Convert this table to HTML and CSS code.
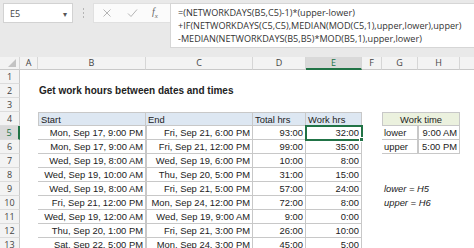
FILE: index.html
```html
<!DOCTYPE html>
<html>
<head>
<meta charset="utf-8">
<link rel="stylesheet" href="styles.css">
</head>
<body>
<div class="app">
  <div class="toolbar">
    <div class="namebox"><span>E5</span><span class="caret">&#9662;</span></div>
    <div class="grip"><span></span><span></span><span></span></div>
    <div class="iconbox">
      <svg class="ico" width="10" height="10" viewBox="0 0 10 10"><path d="M1.5 1.5 L8.5 8.5 M8.5 1.5 L1.5 8.5" stroke="#b5b5b5" stroke-width="1" fill="none"/></svg>
      <svg class="ico" width="11" height="10" viewBox="0 0 11 10"><path d="M1 5.5 L4 8.5 L10 1.5" stroke="#b5b5b5" stroke-width="1" fill="none"/></svg>
      <span class="fx">f<sub>x</sub></span>
    </div>
    <div class="formula">
      <div>=(NETWORKDAYS(B5,C5)-1)*(upper-lower)</div>
      <div>+IF(NETWORKDAYS(C5,C5),MEDIAN(MOD(C5,1),upper,lower),upper)</div>
      <div>-MEDIAN(NETWORKDAYS(B5,B5)*MOD(B5,1),upper,lower)</div>
    </div>
  </div>
  <div class="sheet">
    <div class="ch corner"><span class="tri"></span></div>
    <div class="ch">A</div><div class="ch">B</div><div class="ch">C</div><div class="ch">D</div><div class="ch sel">E</div><div class="ch">F</div><div class="ch">G</div><div class="ch">H</div><div class="ch last"></div>

    <div class="rh">1</div><div class="c"></div><div class="c"></div><div class="c"></div><div class="c"></div><div class="c"></div><div class="c"></div><div class="c"></div><div class="c"></div><div class="c"></div>

    <div class="rh">2</div><div class="c"></div><div class="c title">Get work hours between dates and times</div><div class="c"></div><div class="c"></div><div class="c"></div><div class="c"></div><div class="c"></div><div class="c"></div><div class="c"></div>

    <div class="rh">3</div><div class="c"></div><div class="c"></div><div class="c"></div><div class="c"></div><div class="c"></div><div class="c"></div><div class="c"></div><div class="c"></div><div class="c"></div>

    <div class="rh">4</div><div class="c"></div><div class="c t hb">Start</div><div class="c t hb">End</div><div class="c t hb">Total hrs</div><div class="c t hb">Work hrs</div><div class="c"></div><div class="c t hg span2">Work time</div><div class="c"></div>

    <div class="rh rsel">5</div><div class="c"></div><div class="c t r">Mon, Sep 17, 9:00 PM</div><div class="c t r">Fri, Sep 21, 6:00 PM</div><div class="c t r">93:00</div><div class="c t r active">32:00<span class="handle"></span></div><div class="c"></div><div class="c t">lower</div><div class="c t r">9:00 AM</div><div class="c"></div>

    <div class="rh">6</div><div class="c"></div><div class="c t r">Mon, Sep 17, 9:00 AM</div><div class="c t r">Fri, Sep 21, 12:00 PM</div><div class="c t r">99:00</div><div class="c t r">35:00</div><div class="c"></div><div class="c t">upper</div><div class="c t r">5:00 PM</div><div class="c"></div>

    <div class="rh">7</div><div class="c"></div><div class="c t r">Wed, Sep 19, 8:00 AM</div><div class="c t r">Wed, Sep 19, 6:00 PM</div><div class="c t r">10:00</div><div class="c t r">8:00</div><div class="c"></div><div class="c"></div><div class="c"></div><div class="c"></div>

    <div class="rh">8</div><div class="c"></div><div class="c t r">Wed, Sep 19, 10:00 AM</div><div class="c t r">Thu, Sep 20, 5:00 PM</div><div class="c t r">31:00</div><div class="c t r">15:00</div><div class="c"></div><div class="c"></div><div class="c"></div><div class="c"></div>

    <div class="rh">9</div><div class="c"></div><div class="c t r">Wed, Sep 19, 8:00 AM</div><div class="c t r">Fri, Sep 21, 5:00 PM</div><div class="c t r">57:00</div><div class="c t r">24:00</div><div class="c"></div><div class="c note">lower = H5</div><div class="c"></div><div class="c"></div>

    <div class="rh">10</div><div class="c"></div><div class="c t r">Fri, Sep 21, 12:00 PM</div><div class="c t r">Mon, Sep 24, 12:00 PM</div><div class="c t r">72:00</div><div class="c t r">8:00</div><div class="c"></div><div class="c note">upper = H6</div><div class="c"></div><div class="c"></div>

    <div class="rh">11</div><div class="c"></div><div class="c t r">Wed, Sep 19, 12:00 AM</div><div class="c t r">Wed, Sep 19, 9:00 AM</div><div class="c t r">9:00</div><div class="c t r">0:00</div><div class="c"></div><div class="c"></div><div class="c"></div><div class="c"></div>

    <div class="rh">12</div><div class="c"></div><div class="c t r">Thu, Sep 20, 1:00 PM</div><div class="c t r">Fri, Sep 21, 3:00 PM</div><div class="c t r">26:00</div><div class="c t r">10:00</div><div class="c"></div><div class="c"></div><div class="c"></div><div class="c"></div>

    <div class="rh">13</div><div class="c"></div><div class="c t r">Sat, Sep 22, 5:00 PM</div><div class="c t r">Mon, Sep 24, 3:00 PM</div><div class="c t r">45:00</div><div class="c t r">5:00</div><div class="c"></div><div class="c"></div><div class="c"></div><div class="c"></div>
  </div>
</div>
</body>
</html>
```

FILE: styles.css
```css
* { box-sizing: border-box; }
html, body { margin: 0; padding: 0; }
body {
  width: 474px;
  height: 248px;
  overflow: hidden;
  background: #fff;
  font-family: "Liberation Sans", Arial, sans-serif;
}
.app { width: 474px; height: 248px; overflow: hidden; }

.toolbar {
  height: 57px;
  background: #e9e9e9;
  display: flex;
  align-items: flex-start;
  padding: 3px 0 0 3px;
}
.namebox {
  width: 70px;
  height: 20px;
  background: #fff;
  border: 1px solid #d2d2d2;
  display: flex;
  align-items: center;
  justify-content: space-between;
  padding: 0 5px 0 6px;
  font-size: 9px;
  color: #444;
  font-family: "Open Sans", sans-serif;
}
.caret { font-size: 8px; color: #555; }
.grip {
  width: 20px;
  height: 20px;
  display: flex;
  flex-direction: column;
  align-items: center;
  justify-content: center;
  gap: 2px;
}
.grip span { width: 1px; height: 2px; background: #b5b5b5; display: block; }
.iconbox {
  width: 77px;
  height: 20px;
  background: #fbfbfb;
  border: 1px solid #e0e0e0;
  border-right: none;
  display: flex;
  align-items: center;
  padding-left: 8px;
  gap: 15px;
}
.fx {
  font-family: "Liberation Serif", serif;
  font-style: italic;
  font-size: 10px;
  color: #666;
  margin-left: -1px;
}
.fx sub { font-size: 7px; }
.formula {
  flex: 1;
  height: 45px;
  background: #fff;
  border: 1px solid #d6d6d6;
  border-right: none;
  padding: 2px 0 0 7px;
  font-family: "Open Sans", sans-serif;
  font-size: 9.1px;
  line-height: 13px;
  color: #333;
  white-space: nowrap;
}

.sheet {
  display: grid;
  grid-template-columns: 20px 18px 108px 107px 53px 56px 20px 36px 42px 14px;
  grid-template-rows: 13px repeat(13, 14px);
  font-size: 9.4px;
  color: #222;
}
.ch {
  background: #f3f3f3;
  border-right: 1px solid #d6d6d6;
  border-bottom: 1px solid #c9c9c9;
  text-align: center;
  font-size: 9px;
  line-height: 12px;
  color: #444;
  font-family: "Open Sans", sans-serif;
}
.ch.sel { background: #d9d9d9; color: #217346; border-bottom: 2px solid #217346; }
.ch.last { border-right: none; }
.corner { position: relative; }
.tri {
  position: absolute;
  right: 3px;
  bottom: 2px;
  width: 0; height: 0;
  border-left: 8px solid transparent;
  border-bottom: 8px solid #c3c3c3;
}
.rh {
  background: #f3f3f3;
  border-right: 1px solid #c9c9c9;
  border-bottom: 1px solid #dcdcdc;
  text-align: center;
  font-size: 9px;
  line-height: 13px;
  color: #444;
  font-family: "Open Sans", sans-serif;
}
.rh.rsel { background: #d9d9d9; color: #217346; border-right: 2px solid #217346; }

.c {
  white-space: nowrap;
  line-height: 14px;
  padding: 0 2px;
  position: relative;
}
.title { font-weight: bold; overflow: visible; padding-left: 1px; font-size: 10px; }
.t {
  border-right: 1px solid #c8c8c8;
  border-bottom: 1px solid #c8c8c8;
  line-height: 13px;
}
.r { text-align: right; }
.hb { background: #dde7f2; border-top: 1px solid #c8c8c8; text-align: left; }
.hg { background: #ebf1de; border-top: 1px solid #c8c8c8; border-left: 1px solid #c8c8c8; text-align: center; }
.span2 { grid-column: span 2; }
.sheet > .c.t:nth-child(10n+3) { border-left: 1px solid #c8c8c8; }
.sheet > .c.t:nth-child(10n+8) { border-left: 1px solid #c8c8c8; }
.active { outline: 2px solid #217346; outline-offset: -1px; z-index: 2; }
.handle {
  position: absolute;
  right: -3px;
  bottom: -3px;
  width: 5px;
  height: 5px;
  background: #217346;
  border: 1px solid #fff;
}
.note { font-style: italic; overflow: visible; }
```
